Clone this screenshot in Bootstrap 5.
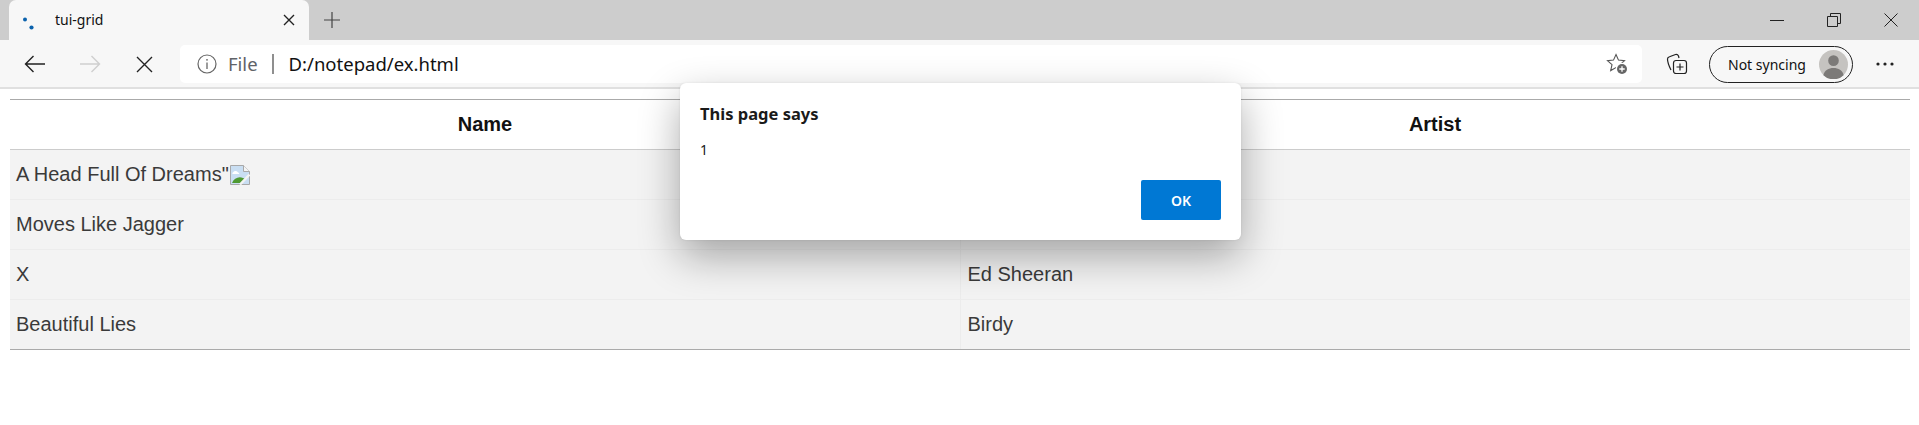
<!doctype html>
<html lang="en">
<head>
<meta charset="utf-8">
<title>tui-grid</title>
<link href="https://cdn.jsdelivr.net/npm/bootstrap@5.3.0/dist/css/bootstrap.min.css" rel="stylesheet">
<style>
html,body{height:425px;overflow:hidden;background:#fff}
body{position:relative;font-family:"Noto Sans","Open Sans",sans-serif}
.tabstrip{height:40px;background:#cdcdcd;padding-left:9px}
.tabbox{width:300px;height:40px;background:#f7f7f7;border-radius:7px 7px 0 0;padding:0 13px 0 7px;font-size:14px;color:#111}
.tabbox .favi{width:20px;height:20px;margin-right:19px}
.tabtitle{line-height:40px}
.newtab{margin-left:14px}
.winbtns{margin-left:auto}
.winbtn{width:57px;height:40px}
.toolbar{height:49px;background:#f7f7f7;border-bottom:2px solid #e0e0e0;padding:5px 0 4px 7px}
.navbtn{width:55px;height:38px;flex:none}
.addr{width:1462px;height:38px;background:#fff;border-radius:5px;margin-left:8px;padding:0 12px 0 17px;font-size:18.500px;color:#111}
.addr .filelbl{color:#5f6368;margin-left:11px}
.addr .sep{width:2px;height:20px;background:#8f8f8f;margin:0 15px 0 14px}
.addr .star{margin-left:auto;margin-right:2px}
.syncpill{width:144px;height:37px;border:1.5px solid #222;border-radius:19px;margin-left:21px;font-size:14px;color:#111;padding:0 4px 0 18px}
.avatar{margin-left:auto}
.collect{margin-left:24px}
.moredots{margin-left:23px}
.gridwrap{padding:10px 9px 0 10px}
.tuitable{width:100%;table-layout:fixed;margin:0;font-family:"Liberation Sans",Arial,sans-serif;font-size:20px;color:#3a3a3a;border-collapse:collapse;--bs-table-bg:transparent;--bs-table-color:#3a3a3a}
.tuitable th,.tuitable td{height:50px;padding:0 7px 2px 7px;vertical-align:middle;box-shadow:none}
.tuitable tbody td:first-child{padding-left:6px}
.tuitable thead th{background:#fff;color:#111;text-align:center;font-weight:700;border-top:1px solid #aaa;border-bottom:1px solid #ccc}
.tuitable tbody td{background:#f3f3f3;border-bottom:1px solid #ececec}
.tuitable tbody td+td{border-left:1px solid #ececec}
.tuitable tbody tr:last-child td{border-bottom:1px solid #aaa}
.brokenimg{display:inline-block;vertical-align:-4px;margin-left:1px}
.alertbox{position:absolute;left:680px;top:83px;width:561px;height:157px;background:#fff;border-radius:6px;box-shadow:0 16px 42px rgba(0,0,0,.33),0 0 3px rgba(0,0,0,.08);padding:19px 20px 20px 20px}
.alerttitle{font-size:16.500px;font-weight:700;color:#1a1a1a;line-height:24px;margin-bottom:15px}
.alertmsg{font-size:14px;color:#1a1a1a;line-height:18px}
.okbtn{width:80px;height:40px;background:#0078d4;border:0;border-radius:2px;color:#fff;font-size:14px;font-weight:600;padding:0}
.okbtn:hover{background:#0078d4;color:#fff}
</style>
</head>
<body>
<header>
  <div class="tabstrip d-flex align-items-center">
    <div class="tabbox d-flex align-items-center">
      <svg class="favi" viewBox="0 0 20 20"><circle cx="9" cy="9.500" r="2" fill="#0b62ad"/><circle cx="15.500" cy="17.500" r="2.100" fill="#0b62ad"/></svg>
      <span class="tabtitle">tui-grid</span>
      <svg class="ms-auto" width="14" height="14" viewBox="0 0 14 14"><path d="M2 2l10 10M12 2L2 12" stroke="#222" stroke-width="1.400"/></svg>
    </div>
    <svg class="newtab" width="18" height="18" viewBox="0 0 18 18"><path d="M9 1v16M1 9h16" stroke="#444" stroke-width="1.200"/></svg>
    <div class="winbtns d-flex">
      <div class="winbtn d-flex align-items-center justify-content-center"><svg width="14" height="14" viewBox="0 0 14 14"><path d="M0 7.500h14" stroke="#222" stroke-width="1"/></svg></div>
      <div class="winbtn d-flex align-items-center justify-content-center"><svg width="14" height="14" viewBox="0 0 14 14"><path d="M.5 3.500h10v10H.5zM3.500 3.500v-3h10v10h-3" fill="none" stroke="#222" stroke-width="1"/></svg></div>
      <div class="winbtn d-flex align-items-center justify-content-center"><svg width="14" height="14" viewBox="0 0 14 14"><path d="M.5.5l13 13M13.500.5l-13 13" stroke="#222" stroke-width="1"/></svg></div>
    </div>
  </div>
  <div class="toolbar d-flex align-items-center">
    <div class="navbtn d-flex align-items-center justify-content-center"><svg width="22" height="18" viewBox="0 0 22 18"><path d="M21 9H1.500M9.500 1L1.500 9l8 8" fill="none" stroke="#222" stroke-width="1.400"/></svg></div>
    <div class="navbtn d-flex align-items-center justify-content-center"><svg width="22" height="18" viewBox="0 0 22 18"><path d="M1 9h19.500M12.500 1l8 8-8 8" fill="none" stroke="#cfcfcf" stroke-width="1.400"/></svg></div>
    <div class="navbtn d-flex align-items-center justify-content-center"><svg width="17" height="17" viewBox="0 0 17 17"><path d="M1 1l15 15M16 1L1 16" stroke="#222" stroke-width="1.400"/></svg></div>
    <div class="addr d-flex align-items-center">
      <svg width="20" height="20" viewBox="0 0 20 20"><circle cx="10" cy="10" r="9" fill="none" stroke="#666" stroke-width="1.200"/><path d="M10 8.500V15" stroke="#666" stroke-width="1.300"/><circle cx="10" cy="5.800" r=".9" fill="#666"/></svg>
      <span class="filelbl">File</span>
      <span class="sep"></span>
      <span>D:/notepad/ex.html</span>
      <svg class="star" width="22" height="22" viewBox="0 0 22 22"><path d="M10 1.500l2.500 5.600 6 .6-4.500 4 1.300 5.900-5.300-3-5.300 3 1.300-5.900-4.500-4 6-.6z" fill="#fff" stroke="#555" stroke-width="1.100"/><circle cx="16" cy="16" r="6.200" fill="#fff"/><circle cx="16" cy="16" r="5" fill="#666"/><path d="M16 13.300v5.400M13.300 16h5.400" stroke="#fff" stroke-width="1.300"/></svg>
    </div>
    <svg class="collect" width="22" height="22" viewBox="0 0 22 22"><path d="M5 17C2.500 12 1.500 8 1.500 6c0-1.500 1-2 2-2.300L9.500 1.500c1.500-.4 2.500.4 3 1.500l.5 2" fill="none" stroke="#222" stroke-width="1.200"/><rect x="7.500" y="7.500" width="13" height="13" rx="2.500" fill="#f7f7f7" stroke="#222" stroke-width="1.200"/><path d="M14 10.500v7M10.500 14h7" stroke="#222" stroke-width="1.200"/></svg>
    <div class="syncpill d-flex align-items-center">
      <span>Not syncing</span>
      <svg class="avatar" width="29" height="29" viewBox="0 0 30 30"><circle cx="15" cy="15" r="15" fill="#c5c3c0"/><circle cx="15" cy="11" r="5.500" fill="#7c7a78"/><path d="M4.500 26c1-5 5.500-7.500 10.500-7.500S24.500 21 25.500 26A15 15 0 0 1 4.500 26z" fill="#7c7a78"/></svg>
    </div>
    <svg class="moredots" width="18" height="6" viewBox="0 0 18 6"><circle cx="2" cy="3" r="1.600" fill="#222"/><circle cx="9" cy="3" r="1.600" fill="#222"/><circle cx="16" cy="3" r="1.600" fill="#222"/></svg>
  </div>
</header>
<main class="gridwrap">
  <table class="table tuitable">
    <thead><tr><th>Name</th><th>Artist</th></tr></thead>
    <tbody>
      <tr><td>A Head Full Of Dreams"<svg class="brokenimg" width="20" height="20" viewBox="0 0 20 20"><path d="M.5.5h13l6 6v13H.5z" fill="#c9def2" stroke="#a8a8a8"/><path d="M13.500.5v6h6" fill="#f4f4f4" stroke="#a8a8a8"/><path d="M3 7.500c1-2 4-2 5 0 1 0 1.500 1 1 1.500H3c-1 0-1-1.500 0-1.500z" fill="#fff"/><path d="M2 18c2-5 7-7 11-5l3 1-4 4z" fill="#4f9a32"/><path d="M19.500 9.500L10 19.500" stroke="#f3f3f3" stroke-width="2.500"/></svg></td><td></td></tr>
      <tr><td>Moves Like Jagger</td><td></td></tr>
      <tr><td>X</td><td>Ed Sheeran</td></tr>
      <tr><td>Beautiful Lies</td><td>Birdy</td></tr>
    </tbody>
  </table>
</main>
<div class="alertbox d-flex flex-column">
  <div class="alerttitle">This page says</div>
  <div class="alertmsg">1</div>
  <div class="mt-auto d-flex justify-content-end"><button class="btn okbtn" type="button">OK</button></div>
</div>
</body>
</html>
